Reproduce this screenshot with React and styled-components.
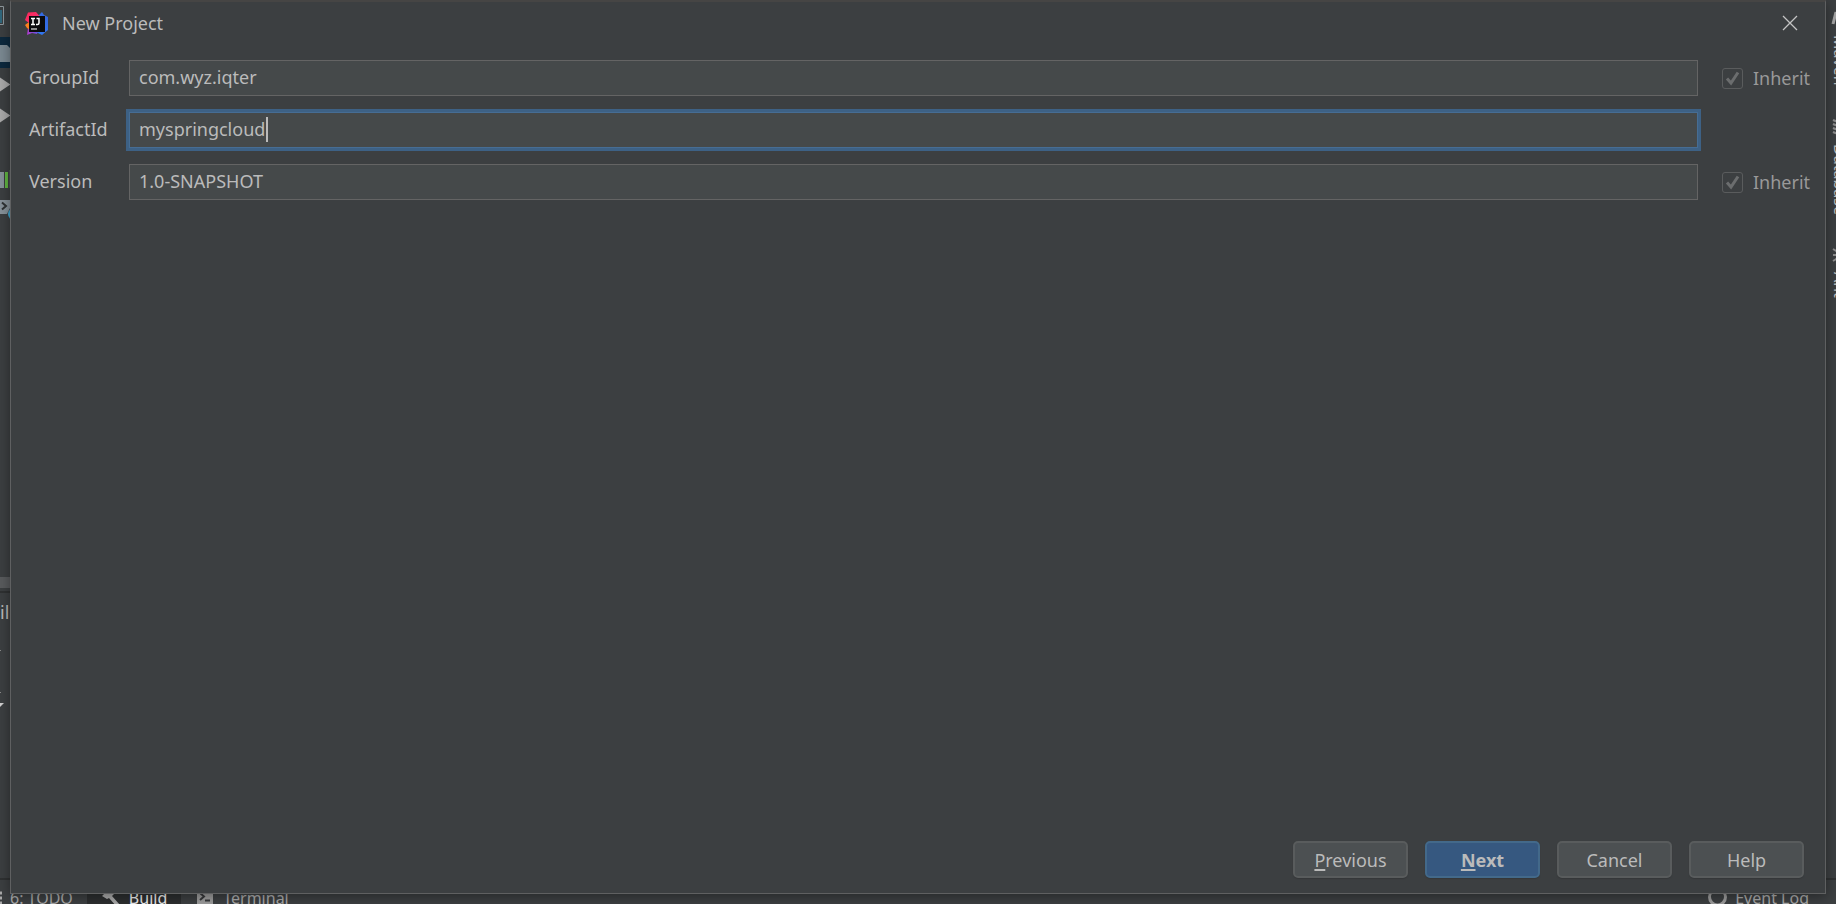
import styled, { createGlobalStyle } from "styled-components";

const GlobalStyle = createGlobalStyle`
  * {
    box-sizing: border-box;
  }

  body {
    margin: 0;
    background-color: #3c3f41;
    color: #bbbbbb;
    font-family: "Noto Sans", "Open Sans", sans-serif;
    font-size: 18px;
    line-height: 24px;
    overflow: hidden;
  }
`;

const StyledIde = styled.div`
  position: relative;
  display: flex;
  flex-direction: column;
  height: 100vh;
  overflow: hidden;
  background-color: #3c3f41;
`;

const StyledIdeBody = styled.div`
  display: flex;
  flex: 1;
  justify-content: space-between;
  min-height: 0;
`;

const StyledLeftEdge = styled.aside`
  width: 10px;
  overflow: hidden;

  svg {
    display: block;
  }
`;

const StyledPanelHeader = styled.div`
  border-top: 2px solid #2f3132;
  padding-top: 7px;
  color: #bbbbbb;
  font-size: 18px;
  line-height: 24px;
`;

const StyledToolStripe = styled.nav`
  display: flex;
  flex-direction: column;
  gap: 32px;
  width: 10px;
  padding-top: 11px;
  overflow: hidden;
`;

const StyledStripeBtn = styled.button`
  display: flex;
  flex-shrink: 0;
  align-items: flex-end;
  gap: 8px;
  width: 28px;
  padding: 0;
  border: 0;
  background: none;
  color: #bbbbbb;
  font: inherit;
  font-size: 16px;
  line-height: 28px;
  writing-mode: vertical-rl;
`;

const StyledToolBar = styled.nav`
  display: flex;
  height: 26px;
  padding-right: 13px;
  border-top: 2px solid #2f3132;
  overflow: hidden;
`;

const StyledToolBtn = styled.button`
  display: flex;
  flex-shrink: 0;
  align-items: center;
  gap: 8px;
  height: 36px;
  margin-left: ${(props) => (props.$right ? "auto" : "0")};
  padding: 0 14px 0 ${(props) => (props.$first ? "0" : "15px")};
  border: 0;
  background-color: ${(props) => (props.$active ? "#2c2e2f" : "transparent")};
  color: ${(props) => (props.$active ? "#ededed" : "#aaaaaa")};
  font: inherit;
  font-size: 16px;
`;

const StyledDialog = styled.section`
  position: absolute;
  inset: 0 10px 10px;
  display: flex;
  flex-direction: column;
  border: 1px solid #5f6061;
  border-top: 2px solid #464544;
  background-color: #3c3f41;
  box-shadow: 0 2px 12px rgba(0, 0, 0, 0.4);
`;

const StyledTitleBar = styled.header`
  display: flex;
  align-items: center;
  height: 42px;
  padding: 0 23px 0 14px;
`;

const StyledTitle = styled.h1`
  flex: 1;
  margin: 0 0 0 14px;
  font-size: 18px;
  font-weight: 400;
`;

const StyledCloseBtn = styled.button`
  display: flex;
  padding: 4px;
  border: 0;
  background: none;
`;

const StyledForm = styled.form`
  display: flex;
  flex: 1;
  flex-direction: column;
`;

const StyledFields = styled.div`
  display: grid;
  grid-template-columns: 100px 1fr 110px;
  row-gap: 16px;
  align-items: center;
  padding: 16px 17px 0 18px;
`;

const StyledLabel = styled.label`
  padding-bottom: 2px;
`;

const StyledInputWrapper = styled.div`
  position: relative;
  display: flex;
`;

const StyledInput = styled.input`
  width: 100%;
  height: 36px;
  padding: 0 9px 2px;
  border: 1px solid ${(props) => (props.$focused ? "#466d94" : "#646464")};
  outline: ${(props) => (props.$focused ? "3px solid #3d6185" : "none")};
  border-radius: 0;
  background-color: #45494a;
  color: #bbbbbb;
  font: inherit;
`;

const StyledCaret = styled.span`
  position: absolute;
  top: 5px;
  left: 137px;
  width: 2px;
  height: 25px;
  background-color: #bbbbbb;
`;

const StyledInherit = styled.label`
  display: flex;
  align-items: center;
  gap: 10px;
  padding-left: 24px;
  color: #999999;
`;

const StyledCheckWrapper = styled.span`
  display: grid;

  > * {
    grid-area: 1 / 1;
  }
`;

const StyledCheckbox = styled.input`
  appearance: none;
  width: 21px;
  height: 21px;
  margin: 0;
  border: 1px solid #5a5c5d;
  border-radius: 3px;
`;

const StyledActions = styled.footer`
  display: flex;
  justify-content: flex-end;
  gap: 17px;
  margin-top: auto;
  padding: 0 21px 15px;
`;

const StyledActionBtn = styled.button`
  width: 115px;
  height: 37px;
  padding: 0;
  border: 2px solid ${(props) => (props.$primary ? "#43698a" : "#595c5d")};
  border-radius: 5px;
  background-color: ${(props) => (props.$primary ? "#365880" : "#4c5052")};
  box-shadow: 0 1px 1px #353739;
  color: #bbbbbb;
  font: inherit;
  font-weight: ${(props) => (props.$primary ? 700 : 400)};

  u {
    text-decoration-thickness: 2px;
    text-underline-offset: 2px;
  }
`;

const IdeaLogo = () => (
  <svg width="23" height="23" viewBox="0 0 23 23" aria-hidden="true">
    <defs>
      <linearGradient id="logoPink" x1="0" y1="0" x2="1" y2="1">
        <stop offset="0" stopColor="#fe2857" />
        <stop offset="1" stopColor="#f0337b" />
      </linearGradient>
      <linearGradient id="logoBlue" x1="1" y1="0" x2="0" y2="1">
        <stop offset="0" stopColor="#3563dc" />
        <stop offset="1" stopColor="#2f7cf6" />
      </linearGradient>
      <linearGradient id="logoPurple" x1="0" y1="0" x2="1" y2="0">
        <stop offset="0" stopColor="#b03ac8" />
        <stop offset="1" stopColor="#5b55e8" />
      </linearGradient>
    </defs>
    <path d="M13 4 17 0l2 3 4 2v13l-6 5-6-3z" fill="url(#logoBlue)" />
    <path d="M3 16 2 23l5-2 5 1 2-5z" fill="url(#logoPurple)" />
    <path d="M4 10 0 13l2 3 3 2z" fill="#fc801d" />
    <path d="M3 0.500 11 0l4 4.500-2 4L5 16 4 11 0 8z" fill="url(#logoPink)" />
    <path d="M4 4h16v16H4z" fill="#0b0b0e" />
    <path d="M6 6.500h4M8 6.500v6M6 12.500h4M11.500 6.500h2.500v4.500q0 1.500-1.500 1.500H11" fill="none" stroke="#fff" strokeWidth="1.500" />
    <path d="M6 17h6" stroke="#b9b9b9" strokeWidth="1.500" />
  </svg>
);

// Tree, run and editor icons that stick out on the left of the dialog
const LeftIcons = () => (
  <svg width="10" height="576" aria-hidden="true">
    <path d="M0 6.500h3.500v18H0" fill="none" stroke="#8e989d" strokeWidth="1" />
    <path d="M0 10h2v13H0z" fill="#31687d" />
    <path d="M0 37h10v31H0z" fill="#0d293e" />
    <path d="M0 45h7l3 3v14H0z" fill="#7b8992" />
    <path d="M0 77.500 10.500 84.500 0 91.500zM0 108.500 10.500 115.500 0 122.500z" fill="#a9a9a9" />
    <path d="M0 172h4v16H0z" fill="#87929a" />
    <path d="M5 172h3v16H5z" fill="#62b543" />
    <path d="M9 170h1v18H9z" fill="#4d5052" />
    <path d="M0 200h10v8l-3 6H0z" fill="#87929a" />
    <path d="M2 202.500 6 206 2 209.500" fill="none" stroke="#2f3335" strokeWidth="2" />
    <circle cx="14" cy="214" r="6" fill="#3fa7cf" />
  </svg>
);

const PanelIcons = () => (
  <svg width="10" height="90" aria-hidden="true">
    <path d="M0 26.500h1M0 68.500h1" stroke="#8a8a8a" />
    <path d="M0 79h4L0 83z" fill="#d0d0d0" />
  </svg>
);

const MavenIcon = () => (
  <svg width="28" height="16" viewBox="0 0 28 16" aria-hidden="true">
    <path d="M7 13 10 1M13 13 16 1M10 2q5-1 4 4" fill="none" stroke="#a5a5a5" strokeWidth="3" />
  </svg>
);

const DatabaseIcon = () => (
  <svg width="28" height="18" viewBox="0 0 28 18" aria-hidden="true">
    <path d="M7 2q6 3 12 0M7 6q6 3 12 0M7 10q6 3 12 0M7 14q6 3 12 0" fill="none" stroke="#8f8f8f" strokeWidth="2" />
  </svg>
);

const AntIcon = () => (
  <svg width="28" height="18" viewBox="0 0 28 18" aria-hidden="true">
    <path d="M7 3l5 3M7 9h5M7 15l5-3" stroke="#8f8f8f" strokeWidth="2" />
    <ellipse cx="13" cy="9" rx="3" ry="6" fill="#8f8f8f" />
  </svg>
);

const Field = ({ id, label, value, inherit, focused }) => (
  <>
    <StyledLabel htmlFor={id}>{label}</StyledLabel>
    <StyledInputWrapper>
      <StyledInput id={id} type="text" defaultValue={value} $focused={focused} />
      {focused && <StyledCaret />}
    </StyledInputWrapper>
    {inherit ? (
      <StyledInherit>
        <StyledCheckWrapper>
          <StyledCheckbox type="checkbox" defaultChecked disabled />
          <svg width="21" height="21" viewBox="0 0 21 21" aria-hidden="true">
            <path d="M5 10.500 9 15 16 4.500" fill="none" stroke="#6b6d6e" strokeWidth="3" />
          </svg>
        </StyledCheckWrapper>
        Inherit
      </StyledInherit>
    ) : (
      <span />
    )}
  </>
);

const App = () => (
  <>
    <GlobalStyle />
    <StyledIde>
      <StyledIdeBody>
        <StyledLeftEdge>
          <LeftIcons />
          <svg width="10" height="15" aria-hidden="true">
            <path d="M0 1h10v11H0z" fill="#595b5d" />
          </svg>
          <StyledPanelHeader>il</StyledPanelHeader>
          <PanelIcons />
        </StyledLeftEdge>
        <StyledToolStripe>
          <StyledStripeBtn>
            <MavenIcon />
            Maven
          </StyledStripeBtn>
          <StyledStripeBtn>
            <DatabaseIcon />
            Database
          </StyledStripeBtn>
          <StyledStripeBtn>
            <AntIcon />
            Ant
          </StyledStripeBtn>
        </StyledToolStripe>
      </StyledIdeBody>
      <StyledToolBar>
        <StyledToolBtn $first>
          <svg width="2" height="16" aria-hidden="true">
            <path d="M0 3h2M0 8h2M0 13h2" stroke="#aaaaaa" strokeWidth="3" />
          </svg>
          6: TODO
        </StyledToolBtn>
        <StyledToolBtn $active>
          <svg width="19" height="18" viewBox="0 0 19 18" aria-hidden="true">
            <path d="M0 7 5 2l5 0 2 3-2 2 8 9-3 2-8-9-2 1z" fill="#aaaaaa" />
          </svg>
          Build
        </StyledToolBtn>
        <StyledToolBtn>
          <svg width="19" height="18" viewBox="0 0 19 18" aria-hidden="true">
            <path d="M1 1h16v14H1z" fill="#9c9c9c" />
            <path d="M4 4 8 7.500 4 11M9 11.500h5" fill="none" stroke="#37393b" strokeWidth="2" />
          </svg>
          Terminal
        </StyledToolBtn>
        <StyledToolBtn $right>
          <svg width="19" height="20" viewBox="0 0 19 20" aria-hidden="true">
            <circle cx="9.500" cy="9" r="8" fill="none" stroke="#9c9c9c" strokeWidth="3" />
          </svg>
          Event Log
        </StyledToolBtn>
      </StyledToolBar>
      <StyledDialog>
        <StyledTitleBar>
          <IdeaLogo />
          <StyledTitle>New Project</StyledTitle>
          <StyledCloseBtn type="button" aria-label="Close">
            <svg width="16" height="16" viewBox="0 0 16 16" aria-hidden="true">
              <path d="M1 1 15 15M15 1 1 15" stroke="#c4c4c4" strokeWidth="1.300" />
            </svg>
          </StyledCloseBtn>
        </StyledTitleBar>
        <StyledForm>
          <StyledFields>
            <Field id="groupId" label="GroupId" value="com.wyz.iqter" inherit />
            <Field id="artifactId" label="ArtifactId" value="myspringcloud" focused />
            <Field id="version" label="Version" value="1.0-SNAPSHOT" inherit />
          </StyledFields>
          <StyledActions>
            <StyledActionBtn type="button">
              <u>P</u>revious
            </StyledActionBtn>
            <StyledActionBtn type="button" $primary>
              <u>N</u>ext
            </StyledActionBtn>
            <StyledActionBtn type="button">Cancel</StyledActionBtn>
            <StyledActionBtn type="button">Help</StyledActionBtn>
          </StyledActions>
        </StyledForm>
      </StyledDialog>
    </StyledIde>
  </>
);

export default App;
